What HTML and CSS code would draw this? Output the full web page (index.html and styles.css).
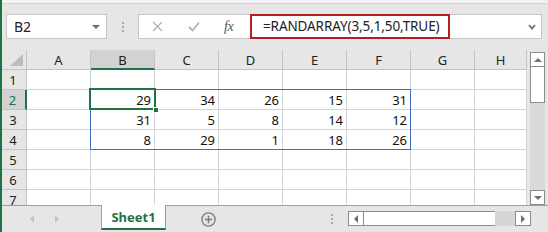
FILE: index.html
```html
<!DOCTYPE html>
<html>
<head>
<meta charset="utf-8">
<link rel="stylesheet" href="styles.css">
</head>
<body>
<div class="app">
  <div class="topband"></div>
  <div class="fbar">
    <div class="namebox"><span>B2</span><span class="tri"></span></div>
    <div class="dots"><i></i><i></i><i></i></div>
    <div class="btns">
      <svg width="11" height="11" viewBox="0 0 11 11"><path d="M1 1L10 10M10 1L1 10" stroke="#b3b3b3" stroke-width="1.4" fill="none"/></svg>
      <svg width="12" height="11" viewBox="0 0 12 11"><path d="M1 6L4.5 9.5L11 1.5" stroke="#b3b3b3" stroke-width="1.8" fill="none"/></svg>
      <span class="fx">fx</span>
    </div>
    <div class="formula">=RANDARRAY(3,5,1,50,TRUE)</div>
    <div class="rest"><svg width="8" height="6" viewBox="0 0 8 6"><path d="M1 1L4 4.5L7 1" stroke="#6d6d6d" stroke-width="1.8" fill="none"/></svg></div>
  </div>
  <div class="main">
    <div class="sheet">
      <div class="grid">
        <div class="h corner"><span class="ctri"></span></div>
        <div class="h">A</div><div class="h sel">B</div><div class="h">C</div><div class="h">D</div><div class="h">E</div><div class="h">F</div><div class="h">G</div><div class="h">H</div>

        <div class="rh">1</div><div class="c"></div><div class="c"></div><div class="c"></div><div class="c"></div><div class="c"></div><div class="c"></div><div class="c"></div><div class="c"></div>
        <div class="rh rsel">2</div><div class="c"></div><div class="c">29</div><div class="c">34</div><div class="c">26</div><div class="c">15</div><div class="c">31</div><div class="c"></div><div class="c"></div>
        <div class="rh">3</div><div class="c"></div><div class="c">31</div><div class="c">5</div><div class="c">8</div><div class="c">14</div><div class="c">12</div><div class="c"></div><div class="c"></div>
        <div class="rh">4</div><div class="c"></div><div class="c">8</div><div class="c">29</div><div class="c">1</div><div class="c">18</div><div class="c">26</div><div class="c"></div><div class="c"></div>
        <div class="rh">5</div><div class="c"></div><div class="c"></div><div class="c"></div><div class="c"></div><div class="c"></div><div class="c"></div><div class="c"></div><div class="c"></div>
        <div class="rh">6</div><div class="c"></div><div class="c"></div><div class="c"></div><div class="c"></div><div class="c"></div><div class="c"></div><div class="c"></div><div class="c"></div>
        <div class="rh">7</div><div class="c"></div><div class="c"></div><div class="c"></div><div class="c"></div><div class="c"></div><div class="c"></div><div class="c"></div><div class="c"></div>
      </div>
      <div class="spill"></div>
      <div class="active"><span class="handle"></span></div>
    </div>
    <div class="vscroll">
      <div class="sbtn up"><span class="t-up"></span></div>
      <div class="vthumb"></div>
      <div class="vtrack"></div>
      <div class="sbtn down"><span class="t-down"></span></div>
    </div>
  </div>
  <div class="tabs">
    <div class="nav"><span class="t-left"></span><span class="t-right"></span></div>
    <div class="tab">Sheet1</div>
    <div class="add"><svg width="15" height="15" viewBox="0 0 15 15"><circle cx="7.5" cy="7.5" r="6.6" stroke="#7a7a7a" stroke-width="1.3" fill="none"/><path d="M7.5 3.8V11.2M3.8 7.5H11.2" stroke="#7a7a7a" stroke-width="1.4"/></svg></div>
    <div class="hdots"><i></i><i></i><i></i></div>
    <div class="hscroll">
      <div class="sbtn hb"><span class="t-left dark"></span></div>
      <div class="hthumb"></div>
      <div class="htrack"></div>
      <div class="sbtn hb"><span class="t-right dark"></span></div>
    </div>
  </div>
</div>
</body>
</html>
```
FILE: styles.css
```css
* { box-sizing: border-box; }
html, body { margin: 0; padding: 0; }
body { width: 548px; height: 232px; overflow: hidden; background: #e6e6e6; font-family: "Noto Sans", "Open Sans", sans-serif; color: #222; }
.app { width: 548px; height: 232px; border-left: 2px solid #217346; display: flex; flex-direction: column; }
.topband { height: 4px; background: #f3f3f3; border-bottom: 1px solid #d4d4d4; }
.fbar { margin-top: 10px; height: 25px; display: flex; padding-left: 4px; }
.namebox { width: 101px; background: #fff; border: 1px solid #c6c6c6; display: flex; align-items: center; justify-content: space-between; padding: 0 6px 0 7px; font-size: 14px; color: #222; }
.tri { width: 0; height: 0; border-left: 4px solid transparent; border-right: 4px solid transparent; border-top: 4px solid #707070; margin-top: 1px; }
.dots { width: 31px; display: flex; flex-direction: column; align-items: center; justify-content: center; gap: 2px; padding-left: 1px; }
.dots i, .hdots i { display: block; width: 2px; height: 2px; background: #a8a8a8; }
.btns { width: 112px; background: #fff; border: 1px solid #c6c6c6; border-right: none; display: flex; align-items: center; padding-left: 13px; gap: 25px; }
.fx { font-family: "Liberation Serif", serif; font-style: italic; font-size: 14px; color: #555; margin-left: -1px; letter-spacing: -0.5px; }
.formula { width: 200px; background: #fff; border: 2px solid #b41e22; font-size: 13.5px; line-height: 21px; padding-left: 11px; color: #222; white-space: nowrap; letter-spacing: -0.1px; }
.rest { width: 92px; background: #fff; border: 1px solid #c6c6c6; border-left: none; display: flex; align-items: center; justify-content: flex-end; padding-right: 5px; }
.main { margin-top: 11px; height: 155px; display: flex; }
.sheet { position: relative; width: 525px; height: 155px; overflow: hidden; }
.grid { display: grid; grid-template-columns: 25px repeat(7, 64px) 52px; grid-auto-rows: 20px; background: #fff; }
.h { background: #e6e6e6; border-right: 1px solid #c4c4c4; border-bottom: 1px solid #c4c4c4; font-size: 13px; display: flex; align-items: center; justify-content: center; color: #222; padding-top: 1px; }
.h.sel { background: #d2d2d2; border-bottom: 2px solid #217346; color: #222; }
.corner { position: relative; }
.ctri { position: absolute; right: 3px; bottom: 3px; width: 0; height: 0; border-left: 13px solid transparent; border-bottom: 12px solid #bdbdbd; }
.rh { background: #e6e6e6; border-right: 1px solid #c4c4c4; border-bottom: 1px solid #c4c4c4; font-size: 13px; display: flex; align-items: center; justify-content: center; color: #222; padding-right: 2px; }
.rh.rsel { background: #d2d2d2; border-right: 2px solid #217346; color: #217346; }
.c { border-right: 1px solid #d4d4d4; border-bottom: 1px solid #d4d4d4; font-size: 13px; text-align: right; padding-right: 3px; line-height: 20px; color: #111; }
.spill { position: absolute; left: 88px; top: 39px; width: 321px; height: 61px; border: 1px solid #3d6fc7; pointer-events: none; }
.active { position: absolute; left: 87px; top: 38px; width: 67px; height: 22px; border: 2px solid #217346; }
.handle { position: absolute; right: -5px; bottom: -5px; width: 6px; height: 6px; background: #217346; border: 1px solid #fff; }
.vscroll { width: 21px; display: flex; flex-direction: column; padding-left: 3px; padding-top: 2px; }
.sbtn { width: 15px; height: 15px; background: #fff; border: 1px solid #8c8c8c; display: flex; align-items: center; justify-content: center; flex: none; }
.vthumb { width: 15px; height: 36px; background: #fff; border: 1px solid #8c8c8c; border-top: none; }
.vtrack { width: 15px; flex: 1; background: #dadada; }
.t-up { width: 0; height: 0; border-left: 4px solid transparent; border-right: 4px solid transparent; border-bottom: 4px solid #707070; }
.t-down { width: 0; height: 0; border-left: 4px solid transparent; border-right: 4px solid transparent; border-top: 4px solid #707070; }
.tabs { height: 27px; border-top: 1px solid #9e9e9e; display: flex; position: relative; }
.nav { width: 99px; display: flex; align-items: center; padding-left: 28px; gap: 21px; }
.t-left { width: 0; height: 0; border-top: 4px solid transparent; border-bottom: 4px solid transparent; border-right: 4px solid #c4c4c4; }
.t-right { width: 0; height: 0; border-top: 4px solid transparent; border-bottom: 4px solid transparent; border-left: 4px solid #c4c4c4; }
.t-left.dark { border-right-color: #6d6d6d; }
.t-right.dark { border-left-color: #6d6d6d; }
.tab { margin-top: -1px; width: 65px; height: 25px; background: #fff; border-left: 1px solid #9e9e9e; border-right: 1px solid #9e9e9e; border-bottom: 2px solid #217346; color: #217346; font-weight: bold; font-size: 13px; display: flex; align-items: center; justify-content: center; padding-top: 1px; }
.add { width: 85px; display: flex; align-items: center; justify-content: flex-start; padding-left: 35px; }
.hdots { width: 97px; display: flex; flex-direction: column; align-items: flex-end; justify-content: center; gap: 2px; padding-right: 15px; }
.hscroll { display: flex; align-items: center; height: 27px; padding-bottom: 2px; }
.hb { width: 16px; height: 15px; }
.hthumb { width: 131px; height: 15px; background: #fff; border-top: 1px solid #8c8c8c; border-bottom: 1px solid #8c8c8c; }
.htrack { width: 20px; height: 15px; background: #d6d6d6; }
```
